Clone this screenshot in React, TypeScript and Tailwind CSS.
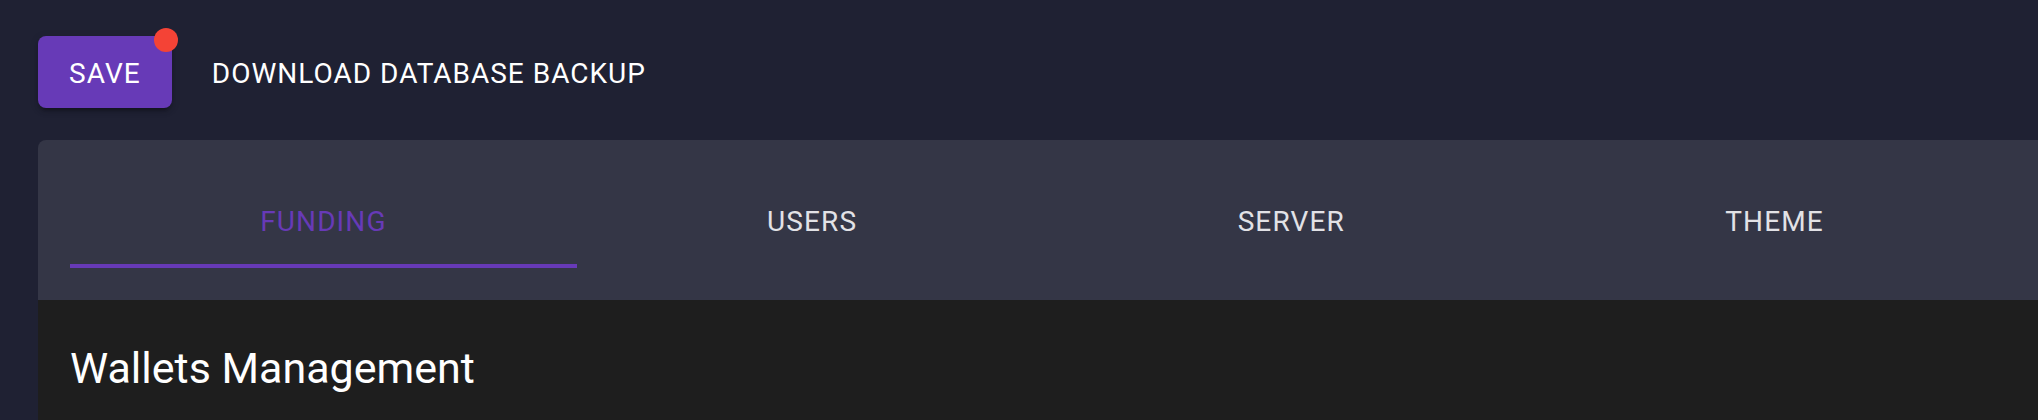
import { useState } from 'react'

const tabs = ['Funding', 'Users', 'Server', 'Theme']

export default function App() {
  const [active, setActive] = useState(0)

  return (
    <div className="min-h-[420px] bg-[#1f2133] font-['Roboto',sans-serif] overflow-hidden">
      {/* Toolbar */}
      <div className="flex items-center gap-[24px] pl-[38px] pt-[36px]">
        <button className="relative h-[72px] px-[31px] pt-[3px] rounded-[8px] bg-[#673ab7] text-white text-[28px] font-normal uppercase tracking-[1.1px] shadow-[0_6px_2px_-4px_rgba(0,0,0,0.2),0_4px_4px_0_rgba(0,0,0,0.14),0_2px_10px_0_rgba(0,0,0,0.12)]">
          Save
          <span className="absolute -top-[8px] -right-[6px] w-[24px] h-[24px] rounded-full bg-[#f44336]" />
        </button>
        <button className="h-[72px] px-[16px] pt-[3px] text-white text-[28px] font-normal uppercase tracking-[1px]">
          Download Database Backup
        </button>
      </div>

      {/* Panel */}
      <div className="ml-[38px] mt-[32px] w-[2008px] rounded-t-[8px] overflow-hidden">
        {/* Tabs */}
        <div className="bg-[#343646] px-[32px] py-[32px]">
          <div className="flex">
            {tabs.map((t, i) => (
              <button
                key={t}
                onClick={() => setActive(i)}
                className={
                  'relative flex-auto h-[96px] px-[32px] pt-[4px] text-[28px] font-normal uppercase tracking-[1.1px] ' +
                  (i === active ? 'text-[#673ab7]' : 'text-[#e2e2e6]')
                }
              >
                {t}
                {i === active && <span className="absolute left-0 right-0 bottom-0 h-[4px] bg-[#673ab7]" />}
              </button>
            ))}
          </div>
        </div>

        {/* Content */}
        <div className="bg-[#1e1e1e] h-[200px] px-[32px] pt-[40px]">
          <h2 className="text-[43px] leading-[56px] text-white font-normal">Wallets Management</h2>
        </div>
      </div>
    </div>
  )
}
